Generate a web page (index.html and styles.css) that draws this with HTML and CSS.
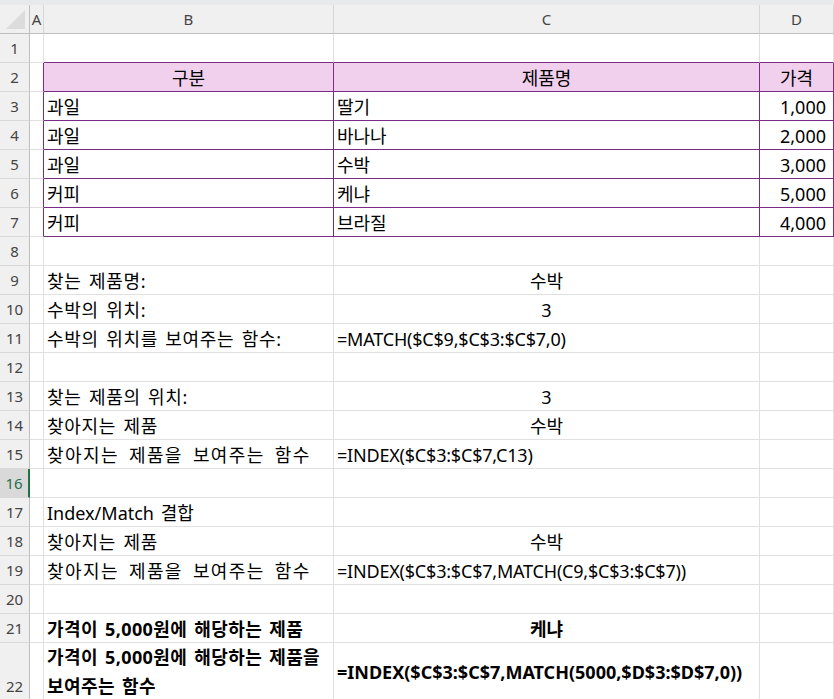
FILE: index.html
```html
<!DOCTYPE html>
<html lang="ko">
<head>
<meta charset="utf-8">
<link rel="stylesheet" href="styles.css">
</head>
<body>
<div class="strip"></div>
<div class="sheet">
  <div class="row hdr">
    <div class="c rh corner"><span class="tri"></span></div>
    <div class="c ch">A</div>
    <div class="c ch">B</div>
    <div class="c ch">C</div>
    <div class="c ch">D</div>
  </div>
  <div class="row">
    <div class="c rh">1</div><div class="c"></div><div class="c ptop"></div><div class="c ptop"></div><div class="c ptop"></div>
  </div>
  <div class="row">
    <div class="c rh">2</div><div class="c pl"></div><div class="c tb pink ctr">구분</div><div class="c tb pink ctr">제품명</div><div class="c tb pink ctr">가격</div>
  </div>
  <div class="row">
    <div class="c rh">3</div><div class="c pl"></div><div class="c tb">과일</div><div class="c tb">딸기</div><div class="c tb rt">1,000</div>
  </div>
  <div class="row">
    <div class="c rh">4</div><div class="c pl"></div><div class="c tb">과일</div><div class="c tb">바나나</div><div class="c tb rt">2,000</div>
  </div>
  <div class="row">
    <div class="c rh">5</div><div class="c pl"></div><div class="c tb">과일</div><div class="c tb">수박</div><div class="c tb rt">3,000</div>
  </div>
  <div class="row">
    <div class="c rh">6</div><div class="c pl"></div><div class="c tb">커피</div><div class="c tb">케냐</div><div class="c tb rt">5,000</div>
  </div>
  <div class="row">
    <div class="c rh">7</div><div class="c pl"></div><div class="c tb">커피</div><div class="c tb">브라질</div><div class="c tb rt">4,000</div>
  </div>
  <div class="row">
    <div class="c rh">8</div><div class="c"></div><div class="c"></div><div class="c"></div><div class="c"></div>
  </div>
  <div class="row">
    <div class="c rh">9</div><div class="c"></div><div class="c k">찾는 제품명:</div><div class="c ctr">수박</div><div class="c"></div>
  </div>
  <div class="row">
    <div class="c rh">10</div><div class="c"></div><div class="c k">수박의 위치:</div><div class="c ctr">3</div><div class="c"></div>
  </div>
  <div class="row">
    <div class="c rh">11</div><div class="c"></div><div class="c k">수박의 위치를 보여주는 함수:</div><div class="c f">=MATCH($C$9,$C$3:$C$7,0)</div><div class="c"></div>
  </div>
  <div class="row">
    <div class="c rh">12</div><div class="c"></div><div class="c"></div><div class="c"></div><div class="c"></div>
  </div>
  <div class="row">
    <div class="c rh">13</div><div class="c"></div><div class="c k">찾는 제품의 위치:</div><div class="c ctr">3</div><div class="c"></div>
  </div>
  <div class="row">
    <div class="c rh">14</div><div class="c"></div><div class="c k">찾아지는 제품</div><div class="c ctr">수박</div><div class="c"></div>
  </div>
  <div class="row">
    <div class="c rh">15</div><div class="c"></div><div class="c k wide">찾아지는 제품을 보여주는 함수</div><div class="c f">=INDEX($C$3:$C$7,C13)</div><div class="c"></div>
  </div>
  <div class="row">
    <div class="c rh sel">16</div><div class="c"></div><div class="c"></div><div class="c"></div><div class="c"></div>
  </div>
  <div class="row">
    <div class="c rh">17</div><div class="c"></div><div class="c">Index/Match 결합</div><div class="c"></div><div class="c"></div>
  </div>
  <div class="row">
    <div class="c rh">18</div><div class="c"></div><div class="c k">찾아지는 제품</div><div class="c ctr">수박</div><div class="c"></div>
  </div>
  <div class="row">
    <div class="c rh">19</div><div class="c"></div><div class="c k wide">찾아지는 제품을 보여주는 함수</div><div class="c f">=INDEX($C$3:$C$7,MATCH(C9,$C$3:$C$7))</div><div class="c"></div>
  </div>
  <div class="row">
    <div class="c rh">20</div><div class="c"></div><div class="c"></div><div class="c"></div><div class="c"></div>
  </div>
  <div class="row">
    <div class="c rh">21</div><div class="c"></div><div class="c b kb">가격이 5,000원에 해당하는 제품</div><div class="c b ctr">케냐</div><div class="c"></div>
  </div>
  <div class="row tall">
    <div class="c rh bot">22</div><div class="c"></div><div class="c b kb wrap">가격이 5,000원에 해당하는 제품을<br>보여주는 함수</div><div class="c b mid">=INDEX($C$3:$C$7,MATCH(5000,$D$3:$D$7,0))</div><div class="c"></div>
  </div>
</div>
</body>
</html>
```
FILE: styles.css
```css
html, body {
  margin: 0;
  padding: 0;
  background: #ffffff;
  overflow: hidden;
}
.strip {
  height: 5px;
  background: #e7e9eb;
}
.sheet {
  width: 834px;
}
.row {
  display: grid;
  grid-template-columns: 30px 14px 290px 426px 74px;
  height: 29px;
}
.row.tall {
  height: 60px;
}
.c {
  box-sizing: border-box;
  border-right: 1px solid #e0e0e0;
  border-bottom: 1px solid #e0e0e0;
  display: flex;
  align-items: flex-end;
  padding: 0 3px 1px 3px;
  font-family: "Noto Sans", "Noto Sans CJK KR", sans-serif;
  font-size: 18px;
  line-height: 24px;
  word-spacing: 2px;
  color: #000;
  white-space: nowrap;
  overflow: visible;
}
.k {
  letter-spacing: 0.7px;
}
.k.wide {
  letter-spacing: 1.4px;
  word-spacing: 4px;
}
.kb {
  letter-spacing: 0.4px;
}
.f {
  letter-spacing: -0.2px;
}
.hdr .c {
  background: #f0f0f0;
  border-bottom: 1px solid #bebebe;
  border-right: 1px solid #d6d6d6;
  justify-content: center;
  align-items: center;
  padding: 0;
  font-size: 15px;
  color: #444;
}
.hdr .corner {
  position: relative;
  border-right: 1px solid #bebebe;
}
.tri {
  position: absolute;
  right: 4px;
  bottom: 4px;
  width: 0;
  height: 0;
  border-left: 19px solid transparent;
  border-bottom: 19px solid #dcdcdc;
}
.rh {
  background: #f0f0f0;
  border-right: 1px solid #bebebe;
  border-bottom: 1px solid #d9d9d9;
  justify-content: center;
  align-items: center;
  padding: 0;
  font-size: 15px;
  word-spacing: 0;
  color: #444;
}
.rh.sel {
  background: #d9d9d9;
  color: #1e6f47;
  border-right: 2px solid #217346;
}
.rh.bot {
  align-items: flex-end;
  padding-bottom: 4px;
}
.ptop {
  border-bottom-color: #7a2c84;
}
.pl {
  border-right-color: #7a2c84;
}
.tb {
  border-right-color: #7a2c84;
  border-bottom-color: #7a2c84;
}
.pink {
  background: #f1d0ee;
}
.ctr {
  justify-content: center;
}
.rt {
  justify-content: flex-end;
  padding-right: 7px;
}
.b {
  font-weight: 700;
}
.wrap {
  display: block;
  white-space: nowrap;
  line-height: 29px;
  padding-top: 0;
}
.mid {
  align-items: center;
}
```
